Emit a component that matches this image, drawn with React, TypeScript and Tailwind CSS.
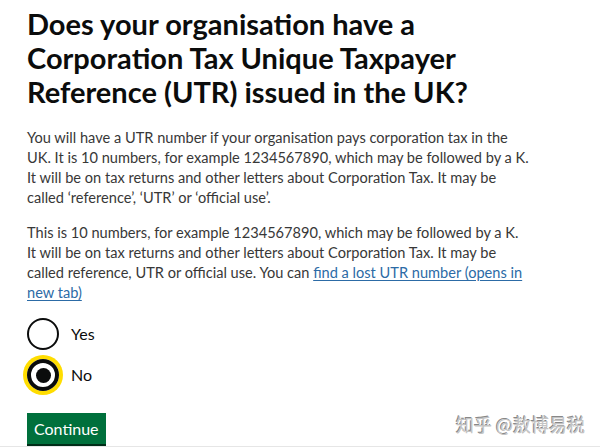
export default function App() {
  return (
    <div className="relative w-[600px] h-[448px] overflow-hidden bg-white font-['Lato',sans-serif]">
      <div className="pl-[27px] pt-[7px]">
        <h1 className="text-[29px] leading-[34px] font-bold text-[#0b0c0c]">
          Does your organisation have a
          <br />
          Corporation Tax Unique Taxpayer
          <br />
          Reference (UTR) issued in the UK?
        </h1>
        <p className="mt-[19px] whitespace-nowrap text-[14.6px] leading-[20px] text-[#383838]">
          You will have a UTR number if your organisation pays corporation tax in the
          <br />
          UK. It is 10 numbers, for example 1234567890, which may be followed by a K.
          <br />
          It will be on tax returns and other letters about Corporation Tax. It may be
          <br />
          called ‘reference’, ‘UTR’ or ‘official use’.
        </p>
        <p className="mt-[15px] whitespace-nowrap text-[14.6px] leading-[20px] text-[#383838]">
          This is 10 numbers, for example 1234567890, which may be followed by a K.
          <br />
          It will be on tax returns and other letters about Corporation Tax. It may be
          <br />
          called reference, UTR or official use. You can{" "}
          <a className="text-[#2c6ba6] underline underline-offset-2">
            find a lost UTR number (opens in
            <br />
            new tab)
          </a>
        </p>
        <div className="mt-[15px] flex flex-col gap-[9px]">
          <label className="flex items-center gap-[12px]">
            <span className="w-[32px] h-[32px] rounded-full border-2 border-[#0b0c0c]" />
            <span className="text-[16px] text-[#0b0c0c]">Yes</span>
          </label>
          <label className="flex items-center gap-[12px]">
            <span className="w-[32px] h-[32px] rounded-full border-[4px] border-[#0b0c0c] ring-[4px] ring-[#ffdd00] flex items-center justify-center">
              <span className="w-[15px] h-[15px] rounded-full bg-[#0b0c0c]" />
            </span>
            <span className="text-[16px] text-[#0b0c0c]">No</span>
          </label>
        </div>
        <button className="mt-[22px] h-[31px] px-[7px] bg-[#00703c] text-white text-[16px] shadow-[0_2px_0_#002d18]">
          Continue
        </button>
      </div>
      <div className="absolute right-[15px] top-[411px] text-[18px] text-[#c4c4c4] font-['Noto_Sans_CJK_SC',sans-serif] [text-shadow:1px_1px_0_#fff,-1px_-1px_0_#888]">
        知乎 @敖博易税
      </div>
      <div className="absolute left-0 right-0 bottom-[1px] h-px bg-[#e6e6e6]" />
    </div>
  );
}
